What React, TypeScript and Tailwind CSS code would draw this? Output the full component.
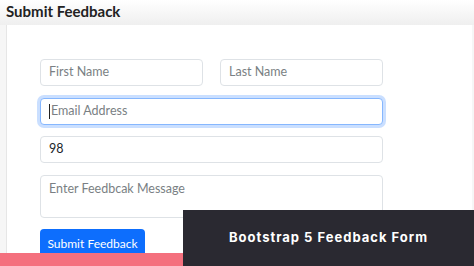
import React from 'react';

const font = { fontFamily: 'Lato, "Open Sans", Arial, sans-serif' };

function Field({ text, value = false, focus = false, className = '' }: { text: string; value?: boolean; focus?: boolean; className?: string }) {
  return (
    <div
      className={`flex h-[27px] items-center rounded-[4px] border bg-white px-[8px] text-[12.5px] ${
        focus ? 'border-[#86b7fe] shadow-[0_0_0_3px_rgba(13,110,253,0.22)]' : 'border-[#dee2e6]'
      } ${value ? 'text-[#212529]' : 'text-[#7a7f84]'} ${className}`}
    >
      {focus && <span className="mr-px h-[15px] w-px bg-[#222]" />}
      {text}
    </div>
  );
}

export default function App() {
  return (
    <div className="relative h-[266px] w-[474px] overflow-hidden bg-[#f6f6f6]" style={font}>
      <div className="h-[25px] bg-gradient-to-b from-white to-[#efefef] px-[6px] text-[15px] font-bold leading-[22px] text-[#222]">
        Submit Feedback
      </div>
      <div className="ml-[6px] h-full w-[466px] border-l border-[#e6e6e6] bg-white pl-[33px] pt-[34px]">
        <div className="flex w-[343px] flex-col gap-[11.5px]">
          <div className="flex gap-[17px]">
            <Field text="First Name" className="w-[163px]" />
            <Field text="Last Name" className="w-[163px]" />
          </div>
          <Field text="Email Address" focus />
          <Field text="98" value />
          <div className="h-[43px] rounded-[4px] border border-[#dee2e6] px-[8px] pt-[4px] text-[12.5px] text-[#7a7f84]">
            Enter Feedbcak Message
          </div>
          <button
            type="button"
            className="h-[30px] w-[105px] rounded-[4px] bg-[#0d6efd] text-[12px] text-white"
            style={font}
          >
            Submit Feedback
          </button>
        </div>
      </div>
      <div className="absolute bottom-0 left-0 h-[13px] w-[183px] bg-[#f4707e]" />
      <div className="absolute bottom-0 left-[183px] flex h-[56px] w-[291px] items-center justify-center bg-[#2a2931] pb-[1px]">
        <span className="text-[13px] font-bold tracking-[1px] text-white" style={{ fontFamily: 'Inter, "Liberation Sans", sans-serif' }}>
          Bootstrap 5 Feedback Form
        </span>
      </div>
    </div>
  );
}
